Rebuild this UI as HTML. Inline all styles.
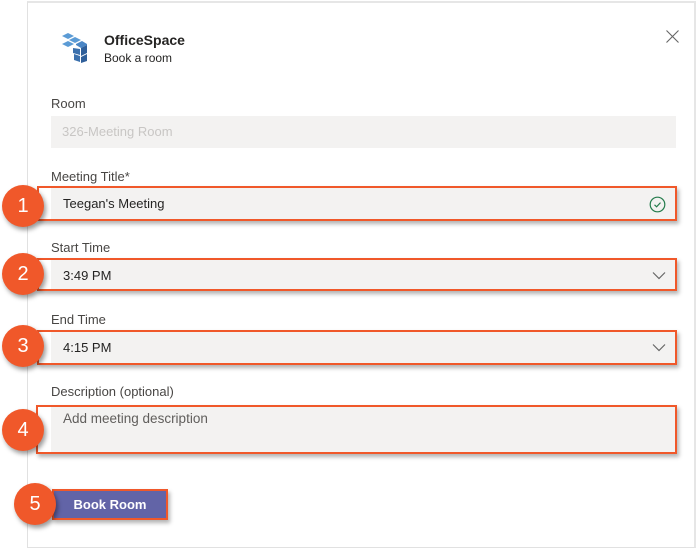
<!DOCTYPE html>
<html><head><style>
*{margin:0;padding:0;box-sizing:border-box}
body{width:698px;height:549px;background:#fff;position:relative;font-family:"Segoe UI","Liberation Sans",sans-serif;overflow:hidden;color:#252423}
.panel{position:absolute;left:27px;top:1px;width:669px;height:547px;border:1px solid #e1e1e1;border-top:2px solid #e6e6e6;border-right:2px solid #e6e6e6}
.lbl{position:absolute;left:51px;font-size:13px;color:#484644}
.inp{position:absolute;background:#f3f2f1;font-size:13px}
.hl{position:absolute;border:2px solid #f0582a;box-shadow:2px 3px 4px rgba(0,0,0,.3)}
.c{position:absolute;width:42px;height:42px;border-radius:50%;background:#f0582a;color:#fff;font-size:20px;text-align:center;line-height:42px;box-shadow:2px 3px 5px rgba(0,0,0,.4)}
</style></head><body>
<div class="panel"></div>
<svg style="position:absolute;left:62px;top:32px" width="26" height="31" viewBox="0 0 26 31">
<polygon points="0,4 6,1 12,4 6,7" fill="#5b9bd5"/>
<polygon points="7,8 13,5 19,8 13,11" fill="#5b9bd5"/>
<polygon points="0,12 6,9 12,12 6,15" fill="#5b9bd5"/>
<polygon points="14,12 20,9 25,12 25,13 19,16 14,13" fill="#4a86c5"/>
<polygon points="19,16 25,13 25,21 19,24" fill="#2f5f9a"/>
<polygon points="19,25 25,22 25,29 19,31" fill="#2f5f9a"/>
<polygon points="11,16 18,17 18,23 11,21" fill="#3b70ad"/>
<polygon points="12,22 18,24 18,30 12,28" fill="#3b70ad"/>
</svg>
<div style="position:absolute;left:104px;top:32px;font-size:14px;font-weight:bold">OfficeSpace</div>
<div style="position:absolute;left:104px;top:51px;font-size:12px">Book a room</div>
<svg style="position:absolute;left:666px;top:30px" width="13" height="13"><path d="M0.5 0.5L12.5 12.5M12.5 0.5L0.5 12.5" stroke="#666" stroke-width="1.1"/></svg>
<div class="lbl" style="top:96px">Room</div>
<div class="inp" style="left:51px;top:116px;width:625px;height:32px;padding:8px 11px;color:#c8c6c4">326-Meeting Room</div>
<div class="lbl" style="top:169px">Meeting Title*</div>
<div class="inp" style="left:51px;top:188px;width:624px;height:32px;padding:8px 12px">Teegan's Meeting</div>
<svg style="position:absolute;left:649px;top:196px" width="17" height="17"><circle cx="8.5" cy="8.5" r="7.3" fill="none" stroke="#237b4b" stroke-width="1.2"/><path d="M5.5 8.8 L7.6 10.8 L11.5 6.6" fill="none" stroke="#237b4b" stroke-width="1.2"/></svg>
<div class="hl" style="left:37px;top:186px;width:640px;height:35px"></div>
<div class="lbl" style="top:240px">Start Time</div>
<div class="inp" style="left:51px;top:260px;width:624px;height:30px;padding:8px 12px">3:49 PM</div>
<svg style="position:absolute;left:652px;top:271px" width="14" height="9"><path d="M1 1.5L7 7.5L13 1.5" fill="none" stroke="#666" stroke-width="1.2"/></svg>
<div class="hl" style="left:37px;top:258px;width:640px;height:33px"></div>
<div class="lbl" style="top:312px">End Time</div>
<div class="inp" style="left:51px;top:332px;width:624px;height:31px;padding:8px 12px">4:15 PM</div>
<svg style="position:absolute;left:652px;top:343px" width="14" height="9"><path d="M1 1.5L7 7.5L13 1.5" fill="none" stroke="#666" stroke-width="1.2"/></svg>
<div class="hl" style="left:37px;top:330px;width:640px;height:35px"></div>
<div class="lbl" style="top:384px">Description (optional)</div>
<div class="inp" style="left:51px;top:406px;width:624px;height:46px;padding:5px 12px;color:#605e5c;font-size:13.5px">Add meeting description</div>
<div class="hl" style="left:36px;top:405px;width:641px;height:49px"></div>
<div style="position:absolute;left:52px;top:489px;width:116px;height:31px;background:#6264a7;border:2px solid #f0582a;box-shadow:2px 3px 4px rgba(0,0,0,.3);color:#fff;font-weight:bold;font-size:13px;text-align:center;line-height:28px;padding-left:0">Book Room</div>
<div class="c" style="left:2px;top:185px">1</div>
<div class="c" style="left:2px;top:253px">2</div>
<div class="c" style="left:2px;top:325px">3</div>
<div class="c" style="left:2px;top:409px">4</div>
<div class="c" style="left:14px;top:483px">5</div>
</body></html>
